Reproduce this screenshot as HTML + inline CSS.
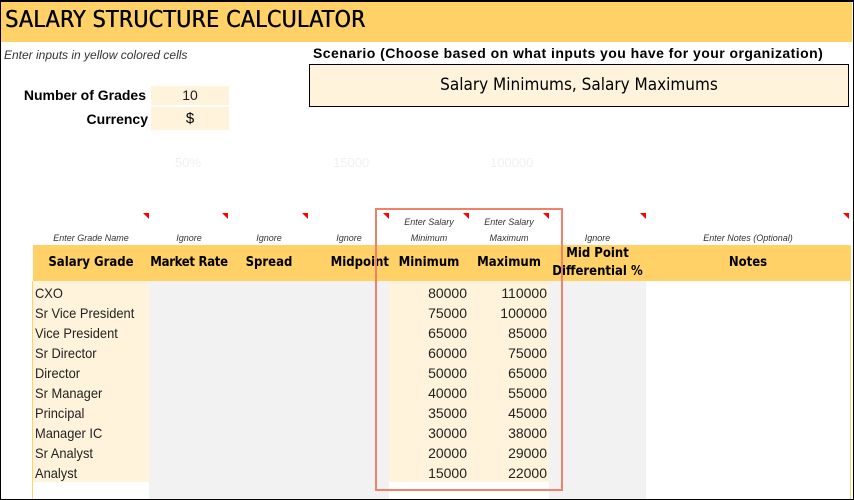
<!DOCTYPE html>
<html><head><meta charset="utf-8"><style>
*{margin:0;padding:0;box-sizing:border-box}
body{width:854px;height:500px;position:relative;overflow:hidden;background:#fff;font-family:"Liberation Sans",sans-serif;color:#000}
.a{position:absolute}
.hdr{font-family:"DejaVu Sans Condensed","DejaVu Sans",sans-serif;font-weight:bold;font-size:13px;text-align:center;line-height:36px;white-space:nowrap}
.it{font-style:italic;font-size:9px;color:#333;text-align:center;white-space:nowrap}
.tri{position:absolute;top:213px;width:0;height:0;border-top:6px solid #f00;border-left:6px solid transparent}
.rows div{height:20px;line-height:20px;font-size:14px;transform:scaleX(.92);transform-origin:left;white-space:nowrap}
.num div{height:20px;line-height:20px;font-size:14px;text-align:right;padding-right:2px}
</style></head><body>
<div class="a" style="left:0;top:0;width:854px;height:500px;border:1px solid #000;border-top:2px solid #000;z-index:5"></div>
<div class="a" style="left:1px;top:2px;width:851px;height:40px;background:#FFD166"></div>
<div class="a" style="left:5px;top:7px;font-size:23px;letter-spacing:0.2px;font-family:'DejaVu Sans Condensed','DejaVu Sans',sans-serif;text-shadow:0.5px 0 0 #000;white-space:nowrap">SALARY STRUCTURE CALCULATOR</div>
<div class="a" style="left:4px;top:48px;font-size:12px;font-style:italic;color:#333">Enter inputs in yellow colored cells</div>
<div class="a" style="left:313px;top:45px;font-size:14px;font-weight:bold;letter-spacing:.45px;white-space:nowrap">Scenario (Choose based on what inputs you have for your organization)</div>
<div class="a" style="left:309px;top:64px;width:540px;height:43px;background:#FFF3DC;border:1px solid #000;text-align:center;line-height:41px;font-size:17px;font-family:'DejaVu Sans Condensed','DejaVu Sans',sans-serif">Salary Minimums, Salary Maximums</div>
<div class="a" style="left:0;top:87px;width:146px;text-align:right;font-size:14px;font-weight:bold">Number of Grades</div>
<div class="a" style="left:0;top:111px;width:148px;text-align:right;font-size:14px;font-weight:bold">Currency</div>
<div class="a" style="left:151px;top:86px;width:78px;height:19px;background:#FFF3DC;text-align:center;font-size:14px;line-height:19px;color:#222">10</div>
<div class="a" style="left:151px;top:107px;width:78px;height:23px;background:#FFF3DC;text-align:center;font-size:15px;line-height:23px">$</div>
<div class="a" style="left:175px;top:155px;font-size:13px;color:#f0f0f0">50%</div>
<div class="a" style="left:333px;top:155px;font-size:13px;color:#f0f0f0">15000</div>
<div class="a" style="left:490px;top:155px;font-size:13px;color:#f0f0f0">100000</div>

<div class="tri" style="left:143px"></div><div class="tri" style="left:222px"></div><div class="tri" style="left:302px"></div><div class="tri" style="left:383px"></div><div class="tri" style="left:463px"></div><div class="tri" style="left:543px"></div><div class="tri" style="left:640px"></div><div class="tri" style="left:843px"></div>

<div class="a it" style="left:33px;top:233px;width:116px">Enter Grade Name</div>
<div class="a it" style="left:149px;top:233px;width:80px">Ignore</div>
<div class="a it" style="left:229px;top:233px;width:80px">Ignore</div>
<div class="a it" style="left:309px;top:233px;width:80px">Ignore</div>
<div class="a it" style="left:389px;top:214px;width:80px;line-height:16px">Enter Salary<br>Minimum</div>
<div class="a it" style="left:469px;top:214px;width:80px;line-height:16px">Enter Salary<br>Maximum</div>
<div class="a it" style="left:549px;top:233px;width:97px">Ignore</div>
<div class="a it" style="left:646px;top:233px;width:204px">Enter Notes (Optional)</div>

<div class="a" style="left:33px;top:245px;width:817px;height:36px;background:#FFD166"></div>
<div class="a hdr" style="left:33px;top:245px;width:116px">Salary Grade</div>
<div class="a hdr" style="left:149px;top:245px;width:80px;letter-spacing:-0.3px">Market Rate</div>
<div class="a hdr" style="left:229px;top:245px;width:80px">Spread</div>
<div class="a hdr" style="left:309px;top:245px;width:80px;text-align:right;overflow:hidden">Midpoint</div>
<div class="a hdr" style="left:389px;top:245px;width:80px">Minimum</div>
<div class="a hdr" style="left:469px;top:245px;width:80px">Maximum</div>
<div class="a hdr" style="left:549px;top:245px;width:97px;line-height:18px">Mid Point<br>Differential %</div>
<div class="a hdr" style="left:646px;top:245px;width:204px">Notes</div>

<div class="a" style="left:32px;top:281px;width:1px;height:219px;background:#FFD166"></div>
<div class="a" style="left:850px;top:245px;width:1px;height:255px;background:#FFD166"></div>
<div class="a" style="left:33px;top:281px;width:116px;height:201px;background:#FFF3DC"></div>
<div class="a" style="left:149px;top:281px;width:240px;height:219px;background:#F2F2F2"></div>
<div class="a" style="left:389px;top:281px;width:160px;height:201px;background:#FFF3DC"></div>
<div class="a" style="left:549px;top:281px;width:97px;height:219px;background:#F2F2F2"></div>

<div class="a rows" style="left:35px;top:283px;color:#222">
<div>CXO</div><div>Sr Vice President</div><div>Vice President</div><div>Sr Director</div><div>Director</div><div>Sr Manager</div><div>Principal</div><div>Manager IC</div><div>Sr Analyst</div><div>Analyst</div></div>
<div class="a num" style="left:389px;top:283px;width:80px;color:#222">
<div>80000</div><div>75000</div><div>65000</div><div>60000</div><div>50000</div><div>40000</div><div>35000</div><div>30000</div><div>20000</div><div>15000</div></div>
<div class="a num" style="left:469px;top:283px;width:80px;color:#222">
<div>110000</div><div>100000</div><div>85000</div><div>75000</div><div>65000</div><div>55000</div><div>45000</div><div>38000</div><div>29000</div><div>22000</div></div>

<div class="a" style="left:375px;top:208px;width:188px;height:283px;border:2px solid #F0826A"></div>
</body></html>
